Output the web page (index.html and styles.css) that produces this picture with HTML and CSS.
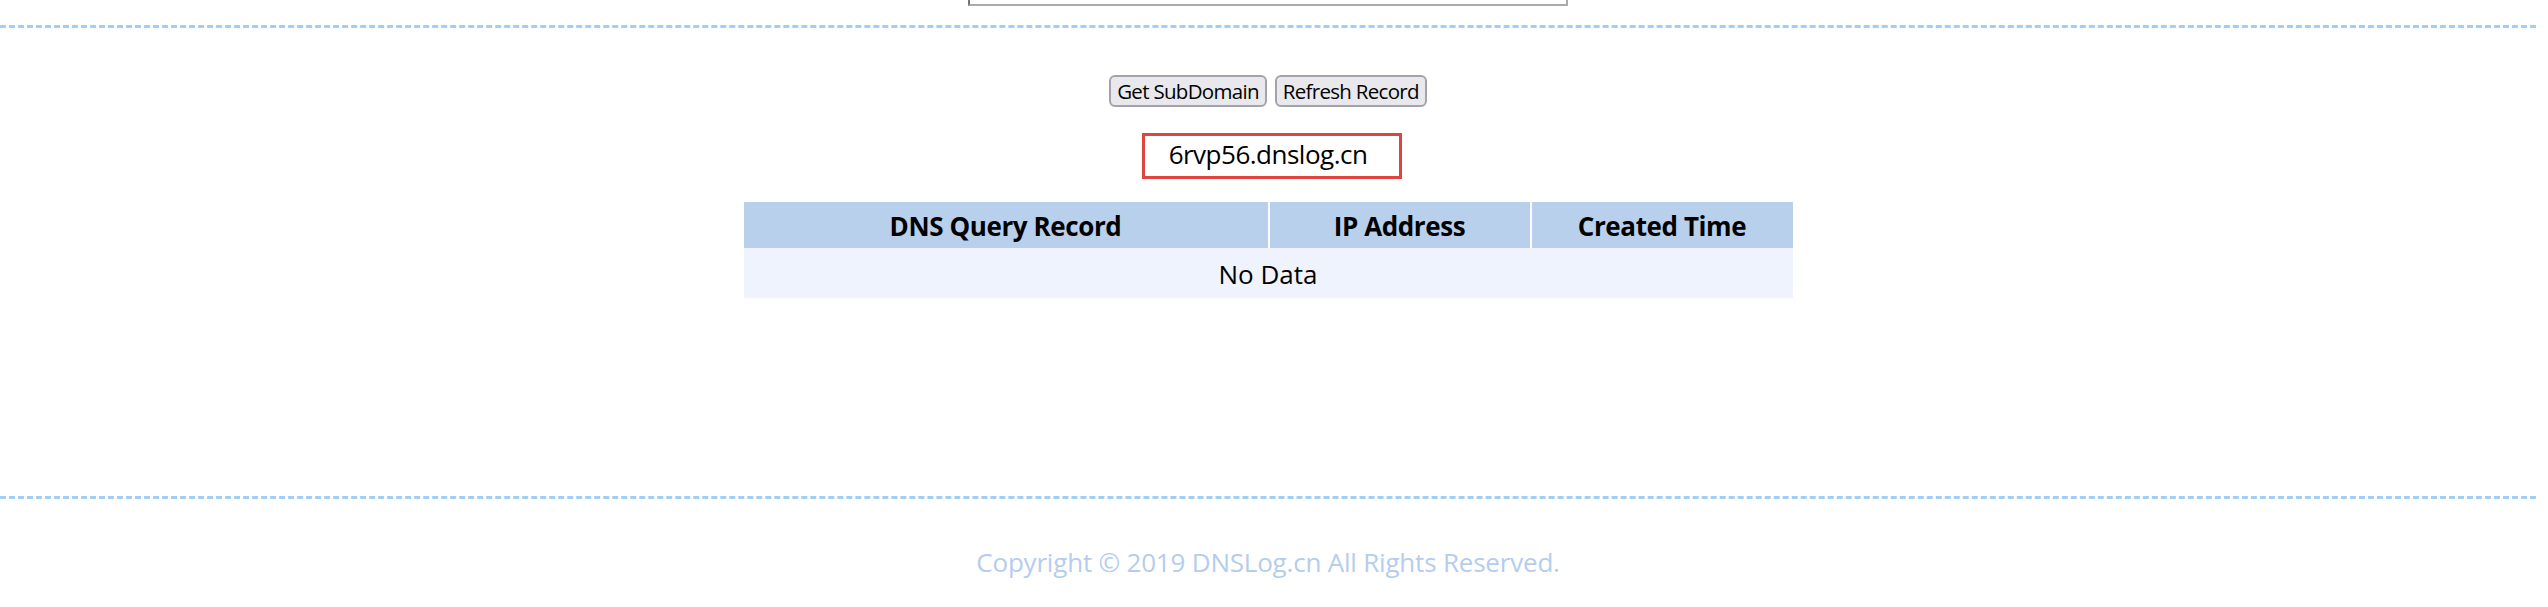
FILE: index.html
```html
<!DOCTYPE html>
<html lang="en">
<head>
<meta charset="utf-8">
<title>DNSLog Platform</title>
<link rel="stylesheet" href="styles.css">
</head>
<body>
<div class="page">
  <header class="top">
    <div class="search-box"></div>
  </header>
  <main class="main">
    <div class="actions">
      <button class="btn" type="button">Get SubDomain</button>
      <button class="btn" type="button">Refresh Record</button>
    </div>
    <div class="domain-wrap">
      <span class="domain">6rvp56.dnslog.cn</span>
    </div>
    <table class="records">
      <colgroup>
        <col class="c1">
        <col class="c2">
        <col class="c3">
      </colgroup>
      <thead>
        <tr>
          <th>DNS Query Record</th>
          <th>IP Address</th>
          <th class="last">Created Time</th>
        </tr>
      </thead>
      <tbody>
        <tr>
          <td colspan="3">No Data</td>
        </tr>
      </tbody>
    </table>
  </main>
  <footer class="footer">Copyright © 2019 DNSLog.cn All Rights Reserved.</footer>
</div>
</body>
</html>
```
FILE: styles.css
```css
* {
  box-sizing: border-box;
}

html, body {
  margin: 0;
  padding: 0;
  background: #ffffff;
}

body {
  font-family: "Open Sans", "Noto Sans", "Liberation Sans", sans-serif;
  font-size: 26px;
  color: #000000;
}

.page {
  width: 2536px;
}

.top {
  padding-bottom: 19px;
  border-bottom: 3px dashed #a0cef5;
}

.search-box {
  width: 600px;
  height: 6px;
  margin: 0 auto;
  border-left: 2px solid #767676;
  border-right: 2px solid #ababab;
  border-bottom: 2px solid #ababab;
}

.main {
  height: 471px;
  padding-top: 47px;
  border-bottom: 3px dashed #a0cef5;
}

.actions {
  display: flex;
  justify-content: center;
  gap: 8px;
}

.btn {
  height: 32px;
  padding: 0 6px;
  font-family: inherit;
  font-size: 20.5px;
  letter-spacing: -0.7px;
  line-height: 28px;
  color: #000000;
  background: #e9e9ed;
  border: 2px solid #a3a3ad;
  border-radius: 6px;
}

.domain-wrap {
  display: flex;
  justify-content: center;
  margin-top: 26px;
  padding-left: 8px;
}

.domain {
  display: block;
  height: 46px;
  padding: 0 32px 4px 24px;
  line-height: 36px;
  letter-spacing: -0.5px;
  border: 3px solid #e0443e;
}

.records {
  width: 1049px;
  margin: 23px auto 0;
  border-collapse: separate;
  border-spacing: 0;
  table-layout: fixed;
}

.c1 { width: 526px; }
.c2 { width: 262px; }
.c3 { width: 261px; }

.records th {
  height: 46px;
  padding: 2px 0 0;
  line-height: 44px;
  font-weight: 700;
  letter-spacing: -0.4px;
  text-align: center;
  background: #b8d0ec;
  border-right: 2px solid #ffffff;
}

.records th.last {
  border-right: 0;
}

.records td {
  height: 50px;
  padding: 2px 0 0;
  line-height: 48px;
  text-align: center;
  background: #eff3fd;
}

.footer {
  padding-top: 45px;
  line-height: 36px;
  letter-spacing: -0.2px;
  text-align: center;
  color: #b4cdee;
}
```
